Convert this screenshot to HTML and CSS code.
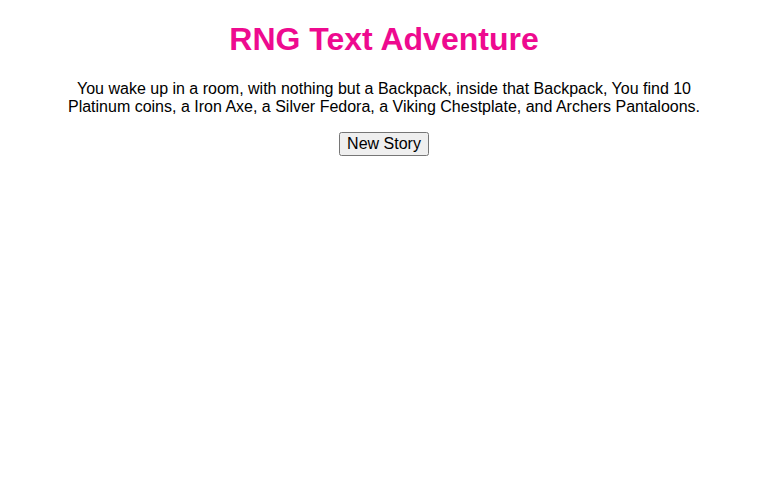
FILE: index.html
```html
<!DOCTYPE html>
<html lang="en">
<head>
    <meta charset="UTF-8">
    <meta name="viewport" content="width=device-width, initial-scale=1.0">
    <title>RNG Text Adventure</title>
    <link rel="stylesheet" href="styles.css">
</head>
<body>
    <h1 class="title">RNG Text Adventure</h1>

    <p id="story" class="story">You wake up in a room, with nothing but a Backpack, inside that Backpack, You find 10 Platinum coins, a Iron Axe, a Silver Fedora, a Viking Chestplate, and Archers Pantaloons.</p>

    <button id="new-story" class="new-story">New Story</button>
</body>
</html>
```

FILE: styles.css
```css
body {
    margin: 0 8px;
    font-family: "Liberation Sans", Arial, sans-serif;
    text-align: center;
    color: #000;
    background: #fff;
}

.title {
    font-size: 32px;
    color: #ee0a8f;
}

.story {
    font-size: 16px;
    max-width: 660px;
    margin-left: auto;
    margin-right: auto;
}

.new-story {
    font-family: "Liberation Sans", Arial, sans-serif;
    font-size: 16px;
}
```
